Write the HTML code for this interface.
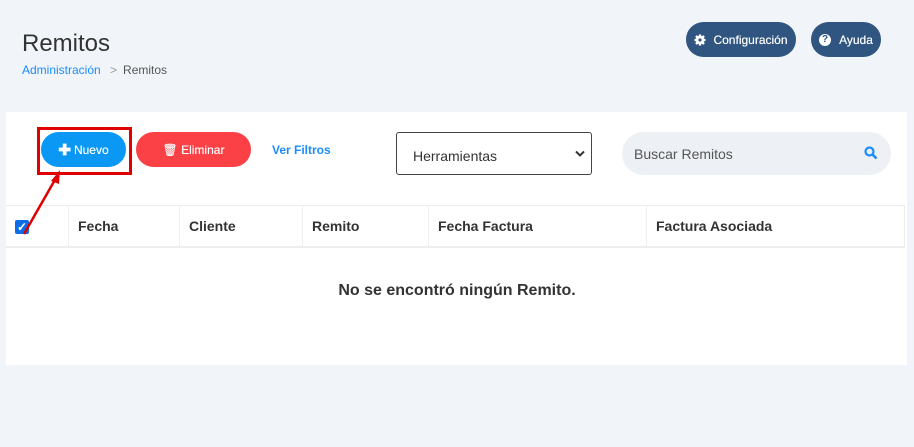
<!DOCTYPE html>
<html><head><style>
body{margin:0;width:914px;height:447px;background:#f1f5f9;font-family:"Liberation Sans",sans-serif;position:relative;overflow:hidden}
.a{position:absolute}
.btn{position:absolute;border-radius:18px;color:#fff;font-size:12px;font-weight:bold;display:flex;align-items:center;justify-content:center}
th{font-size:14px;font-weight:bold;color:#333;text-align:left;padding:0 0 0 9px;height:40px;border-right:1px solid #eee}
</style></head><body>
<div class="a" style="left:22px;top:30px;font-size:24px;color:#333">Remitos</div>
<div class="a" style="left:22px;top:63px;font-size:12px;color:#1a8cff">Administración <span style="color:#999;margin:0 6px">&gt;</span><span style="color:#555">Remitos</span></div>
<div class="btn" style="left:686px;top:22px;width:110px;height:35px;background:#2f5580;font-weight:normal;text-shadow:0 0 0.4px #fff">
<svg width="12" height="12" viewBox="0 0 12 12" style="margin-right:7px"><circle cx="6" cy="6" r="4.2" fill="#fff"/><g stroke="#fff" stroke-width="2.4"><line x1="6" y1="0.5" x2="6" y2="11.5"/><line x1="0.5" y1="6" x2="11.5" y2="6"/><line x1="2" y1="2" x2="10" y2="10"/><line x1="10" y1="2" x2="2" y2="10"/></g><circle cx="6" cy="6" r="1.6" fill="#2f5580"/></svg>Configuración</div>
<div class="btn" style="left:811px;top:22px;width:70px;height:35px;background:#2f5580;font-weight:normal;text-shadow:0 0 0.4px #fff">
<span style="width:12px;height:12px;border-radius:50%;background:#fff;color:#2f5580;font-size:10px;font-weight:bold;display:inline-flex;align-items:center;justify-content:center;margin-right:8px">?</span>Ayuda</div>
<div class="a" style="left:6px;top:112px;width:901px;height:253px;background:#fff"></div>
<div class="btn" style="left:41px;top:132px;width:85px;height:35px;background:#0b98f5;font-weight:normal;text-shadow:0 0 0.4px #fff"><span style="font-size:15px;margin-right:3px;font-weight:bold">✚</span>Nuevo</div>
<div class="a" style="left:37px;top:127px;width:89px;height:42px;border:3px solid #e00000"></div>
<div class="btn" style="left:136px;top:132px;width:115px;height:35px;background:#fc4146;font-weight:normal;text-shadow:0 0 0.4px #fff">🗑&#xFE0E; Eliminar</div>
<div class="a" style="left:272px;top:143px;font-size:12px;font-weight:bold;color:#1a8cff">Ver Filtros</div>
<div class="a" style="left:396px;top:132px;width:196px;height:43px;border:1px solid #444;border-radius:3px;font-size:14px;color:#333;box-sizing:border-box;padding:15px 0 0 16px">Herramientas
<svg width="10" height="7" viewBox="0 0 10 7" style="position:absolute;right:6px;top:17px"><path d="M1 1.5 L5 5.5 L9 1.5" fill="none" stroke="#333" stroke-width="2"/></svg></div>
<div class="a" style="left:622px;top:132px;width:269px;height:43px;border-radius:22px;background:#edf1f6;font-size:14px;color:#555;box-sizing:border-box;padding:14px 0 0 12px">Buscar Remitos
<svg width="14" height="14" viewBox="0 0 14 14" style="position:absolute;right:13px;top:14px"><circle cx="5.5" cy="5.5" r="4" fill="none" stroke="#1a8cff" stroke-width="2.2"/><line x1="8.5" y1="8.5" x2="12.5" y2="12.5" stroke="#1a8cff" stroke-width="2.6"/></svg></div>
<table class="a" style="left:6px;top:205px;border-collapse:collapse;border-top:1px solid #eee;border-bottom:2px solid #eee">
<tr><th style="width:53px;padding:0 0 0 9px"><span style="display:inline-block;width:14px;height:14px;background:#0b6ee8;border-radius:2px;color:#fff;font-size:12px;line-height:14px;text-align:center">✓</span></th><th style="width:101px">Fecha</th><th style="width:113px">Cliente</th><th style="width:116px">Remito</th><th style="width:208px">Fecha Factura</th><th style="width:248px">Factura Asociada</th></tr></table>
<div class="a" style="left:0;width:914px;top:282px;text-align:center;font-size:16px;font-weight:bold;color:#333">No se encontró ningún Remito.</div>
<svg class="a" style="left:0;top:0" width="914" height="447"><line x1="24" y1="234" x2="56" y2="178" stroke="#e00000" stroke-width="2.5"/><polygon points="60,170 51,181 59,184" fill="#e00000"/></svg>
</body></html>
